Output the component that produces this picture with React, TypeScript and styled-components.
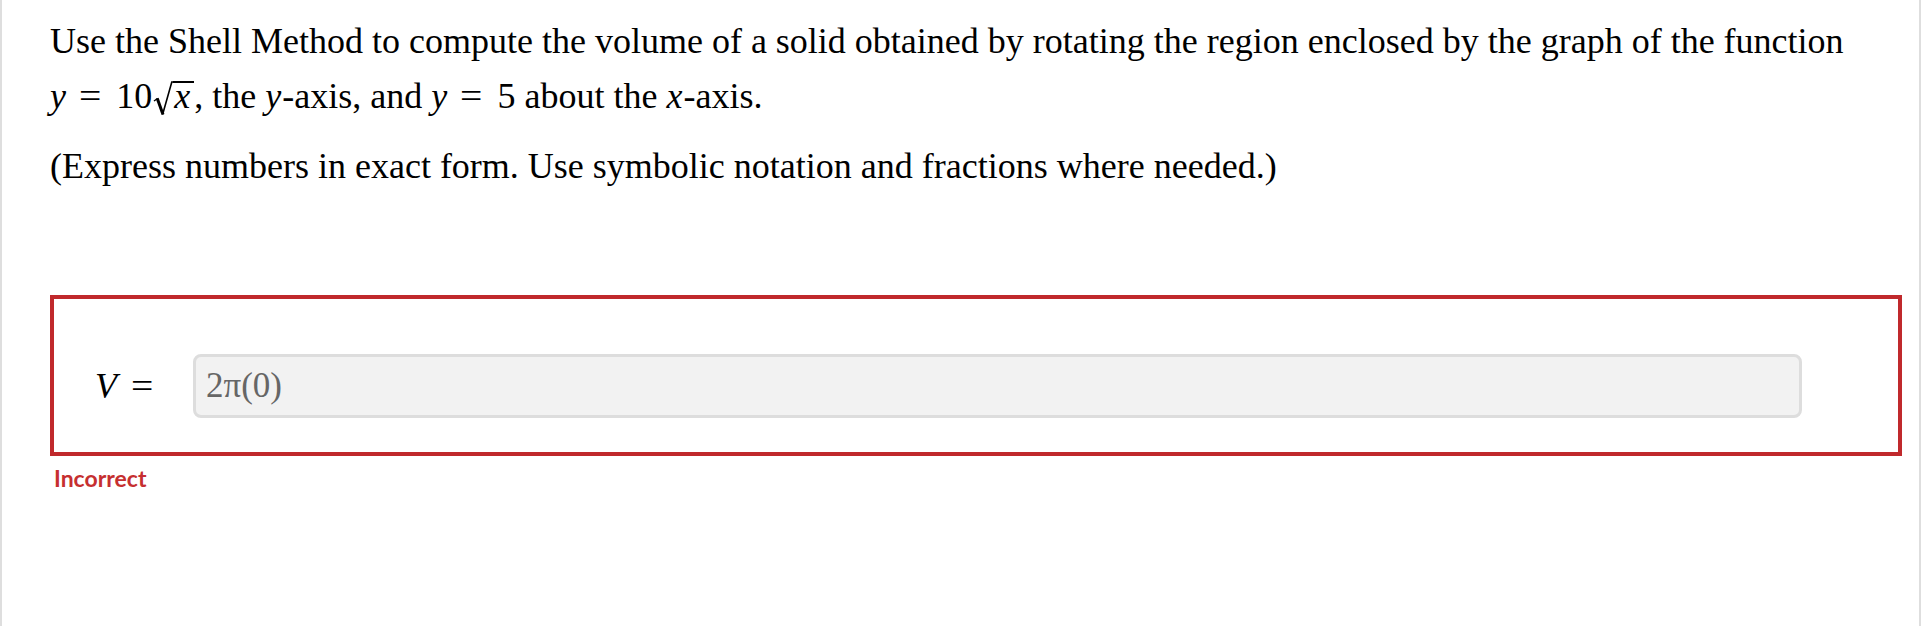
import { createGlobalStyle, styled } from "styled-components";

const GlobalStyle = createGlobalStyle`
  html, body {
    margin: 0;
    padding: 0;
    background: #ffffff;
  }
  body {
    font-family: "Liberation Serif", "Times New Roman", serif;
    color: #000000;
  }
`;

const Frame = styled.div`
  width: 1921px;
  min-height: 626px;
  box-sizing: border-box;
  border-left: 2px solid #dedede;
  border-right: 2px solid #dedede;
  padding: 14px 0 0 48px;
`;

const Question = styled.p`
  width: 1852px;
  margin: 0 0 16px;
  font-size: 36px;
  line-height: 54.7px;
`;

const Var = styled.i`
  font-style: italic;
  margin-right: 1px;
`;

// relation sign with MathJax-style thick spacing
const Rel = styled.span`
  display: inline-block;
  margin: 0 16px 0 13px;
  transform: scaleX(1.1);
`;

const MathRun = styled.span`
  white-space: nowrap;
`;

const RadicalSign = styled.svg`
  width: 20px;
  height: 35px;
  vertical-align: -8px;
  margin-left: 1px;
`;

const Radicand = styled.span`
  display: inline-block;
  line-height: 27px;
  border-top: 2px solid #000;
  padding: 0 3px 0 1px;
`;

function Sqrt({ children }: { children: React.ReactNode }) {
  return (
    <span>
      <RadicalSign viewBox="0 0 20 35">
        <path d="M1 20 L4.5 17.5" stroke="#000" strokeWidth="1.4" fill="none" />
        <path d="M4.2 17.2 L10 33.5" stroke="#000" strokeWidth="3" fill="none" />
        <path d="M9.6 33.5 L18.8 1 L20 1" stroke="#000" strokeWidth="1.6" fill="none" />
      </RadicalSign>
      <Radicand>{children}</Radicand>
    </span>
  );
}

const AnswerBox = styled.div`
  width: 1852px;
  margin-top: 101px;
  box-sizing: border-box;
  border: 4px solid #c0292c;
  padding: 55px 96px 34px 41px;
  display: flex;
  align-items: center;
`;

const Label = styled.div`
  width: 98px;
  flex: none;
  font-size: 36px;
  line-height: 40px;
`;

const Equals = styled.span`
  display: inline-block;
  margin-left: 14px;
  transform: scaleX(1.1);
`;

const Field = styled.div`
  flex: 1;
  height: 64px;
  box-sizing: border-box;
  border: 3px solid #dddddd;
  border-radius: 8px;
  background: #f2f2f2;
  padding: 0 10px;
  display: flex;
  align-items: center;
  font-size: 35px;
  color: #666666;
`;

const Feedback = styled.div`
  margin-top: 9px;
  padding-left: 4px;
  font-family: Lato, "Open Sans", sans-serif;
  font-weight: 700;
  font-size: 23px;
  line-height: 1.2;
  color: #c62f30;
`;

export default function App() {
  return (
    <>
      <GlobalStyle />
      <Frame>
        <Question>
          Use the Shell Method to compute the volume of a solid obtained by rotating the region
          enclosed by the graph of the function{" "}
          <MathRun>
            <Var>y</Var>
            <Rel>=</Rel>10
            <Sqrt>
              <Var>x</Var>
            </Sqrt>
          </MathRun>
          , the <Var>y</Var>-axis, and <Var>y</Var>
          <Rel>=</Rel>5 about the <Var>x</Var>-axis.
        </Question>
        <Question>
          (Express numbers in exact form. Use symbolic notation and fractions where needed.)
        </Question>
        <AnswerBox>
          <Label>
            <Var>V</Var>
            <Equals>=</Equals>
          </Label>
          <Field>2π(0)</Field>
        </AnswerBox>
        <Feedback>Incorrect</Feedback>
      </Frame>
    </>
  );
}
